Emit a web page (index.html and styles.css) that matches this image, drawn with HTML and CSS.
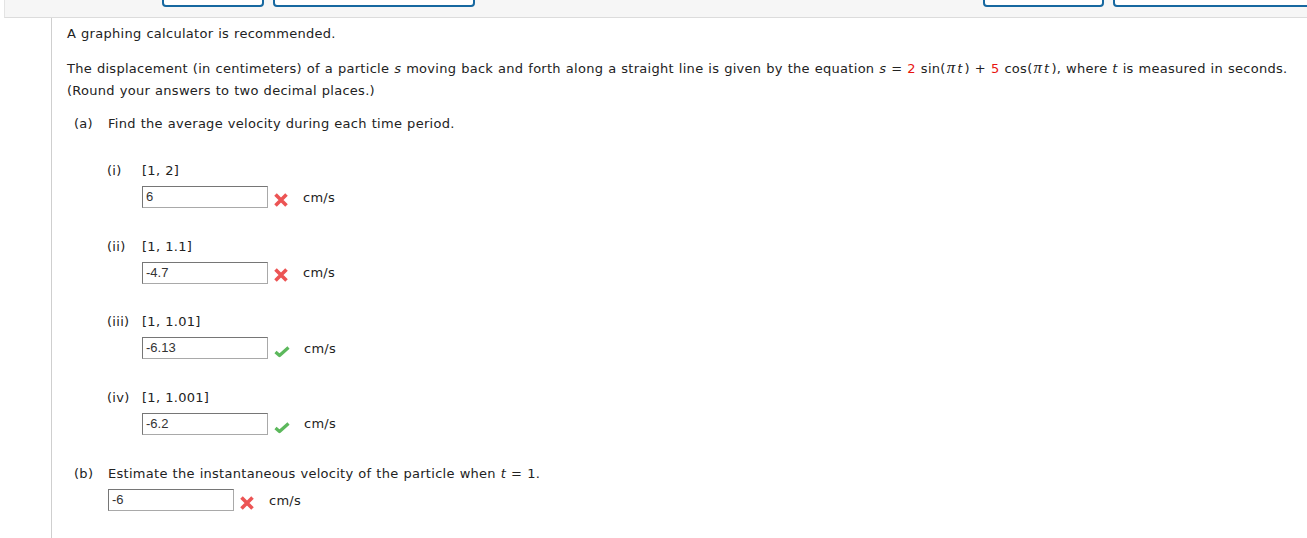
FILE: index.html
```html
<!DOCTYPE html>
<html>
<head>
<meta charset="utf-8">
<link rel="stylesheet" href="styles.css">
</head>
<body>
<div class="topbar">
  <div class="btns-left">
    <span class="tbtn w1"></span>
    <span class="tbtn w2"></span>
  </div>
  <div class="btns-right">
    <span class="tbtn w3"></span>
    <span class="tbtn w4"></span>
  </div>
</div>
<div class="main">
  <p class="line first">A graphing calculator is recommended.</p>
  <p class="line para">The displacement (in centimeters) of a particle <i>s</i> moving back and forth along a straight line is given by the equation <i>s</i> = <span class="red">2</span> sin(<span class="pi">π</span><i class="tv">t</i>) + <span class="red">5</span> cos(<span class="pi">π</span><i class="tv">t</i>), where <i>t</i> is measured in seconds.<br>(Round your answers to two decimal places.)</p>

  <div class="part part-a">
    <div class="row"><span class="plabel">(a)</span><span>Find the average velocity during each time period.</span></div>
    <div class="subs">
      <div class="sub">
        <div class="row"><span class="slabel">(i)</span><span>[1, 2]</span></div>
        <div class="answer">
          <span class="inp">6</span>
          <svg class="icon" viewBox="0 0 16 16"><path d="M2.5 2.5 L13.5 13.5 M13.5 2.5 L2.5 13.5" stroke="#ec5454" stroke-width="3.6" stroke-linecap="butt"/></svg>
          <span class="unit">cm/s</span>
        </div>
      </div>
      <div class="sub">
        <div class="row"><span class="slabel">(ii)</span><span>[1, 1.1]</span></div>
        <div class="answer">
          <span class="inp">-4.7</span>
          <svg class="icon" viewBox="0 0 16 16"><path d="M2.5 2.5 L13.5 13.5 M13.5 2.5 L2.5 13.5" stroke="#ec5454" stroke-width="3.6" stroke-linecap="butt"/></svg>
          <span class="unit">cm/s</span>
        </div>
      </div>
      <div class="sub">
        <div class="row"><span class="slabel">(iii)</span><span>[1, 1.01]</span></div>
        <div class="answer">
          <span class="inp">-6.13</span>
          <svg class="icon ok" viewBox="0 0 16 16"><path d="M1.5 9 L5.5 12.5 L14.5 4.5" fill="none" stroke="#5cb85c" stroke-width="3.2" stroke-linejoin="round"/></svg>
          <span class="unit uok">cm/s</span>
        </div>
      </div>
      <div class="sub">
        <div class="row"><span class="slabel">(iv)</span><span>[1, 1.001]</span></div>
        <div class="answer">
          <span class="inp">-6.2</span>
          <svg class="icon ok" viewBox="0 0 16 16"><path d="M1.5 9 L5.5 12.5 L14.5 4.5" fill="none" stroke="#5cb85c" stroke-width="3.2" stroke-linejoin="round"/></svg>
          <span class="unit uok">cm/s</span>
        </div>
      </div>
    </div>
  </div>

  <div class="part part-b">
    <div class="row"><span class="plabel">(b)</span><span>Estimate the instantaneous velocity of the particle when <i>t</i> = 1.</span></div>
    <div class="answer b-answer">
      <span class="inp">-6</span>
      <svg class="icon" viewBox="0 0 16 16"><path d="M2.5 2.5 L13.5 13.5 M13.5 2.5 L2.5 13.5" stroke="#ec5454" stroke-width="3.6" stroke-linecap="butt"/></svg>
      <span class="unit">cm/s</span>
    </div>
  </div>
</div>
</body>
</html>
```

FILE: styles.css
```css
html, body {
  margin: 0;
  padding: 0;
  background: #fff;
}
body {
  font-family: "DejaVu Sans", Verdana, sans-serif;
  font-size: 13px;
  letter-spacing: 0.28px;
  word-spacing: 0.5px;
  color: #222;
  overflow: hidden;
}
.topbar {
  margin-left: 4px;
  height: 17px;
  background: #f6f6f6;
  border-bottom: 1px solid #dcdcdc;
  border-left: 1px solid #e4e4e4;
  display: flex;
  justify-content: space-between;
  overflow: hidden;
}
.btns-left, .btns-right {
  display: flex;
  gap: 9px;
  align-items: flex-start;
}
.btns-left { margin-left: 157px; }
.tbtn {
  display: block;
  height: 20px;
  margin-top: -13px;
  border: 2px solid #1768a0;
  border-radius: 4px;
  background: #fff;
  box-sizing: border-box;
}
.w1 { width: 102px; }
.w2 { width: 202px; }
.w3 { width: 121px; }
.w4 { width: 200px; margin-right: -6px; }
.main {
  margin-left: 51px;
  border-left: 1px solid #cfcfcf;
  padding-left: 15px;
  height: 520px;
}
.line {
  margin: 0;
  line-height: 22px;
}
.first { padding-top: 5px; }
.para { margin-top: 12px; }
.red { color: #e8130f; }
.pi {
  font-family: "Liberation Serif", "DejaVu Serif", serif;
  font-style: italic;
  font-size: 17px;
  letter-spacing: 0;
  margin-left: 1px;
  margin-right: 2px;
}
.tv { margin-right: 2px; }
.part-a { margin-top: 11px; margin-left: 7px; }
.row {
  display: flex;
  line-height: 22px;
}
.plabel { width: 34px; }
.subs {
  margin-left: 33px;
  margin-top: 25px;
  display: flex;
  flex-direction: column;
  gap: 27.5px;
}
.slabel { width: 35px; }
.answer {
  margin-top: 4px;
  margin-left: 35px;
  display: flex;
  align-items: center;
  height: 22px;
}
.inp {
  box-sizing: border-box;
  width: 126px;
  height: 22px;
  border: 1px solid #a9a9a9;
  border-top-color: #767676;
  border-left-color: #767676;
  font-family: "Liberation Sans", Arial, sans-serif;
  font-size: 13px;
  letter-spacing: 0;
  color: #333;
  line-height: 20px;
  padding-left: 3px;
  background: #fff;
}
.icon {
  width: 16px;
  height: 16px;
  margin-left: 5px;
  margin-top: 5px;
}
.ok { margin-left: 6px; margin-top: 6px; }
.unit { margin-left: 14px; }
.uok { margin-left: 14px; }
.part-b { margin-top: 28.5px; margin-left: 7px; }
.b-answer { margin-left: 34px; }
```
